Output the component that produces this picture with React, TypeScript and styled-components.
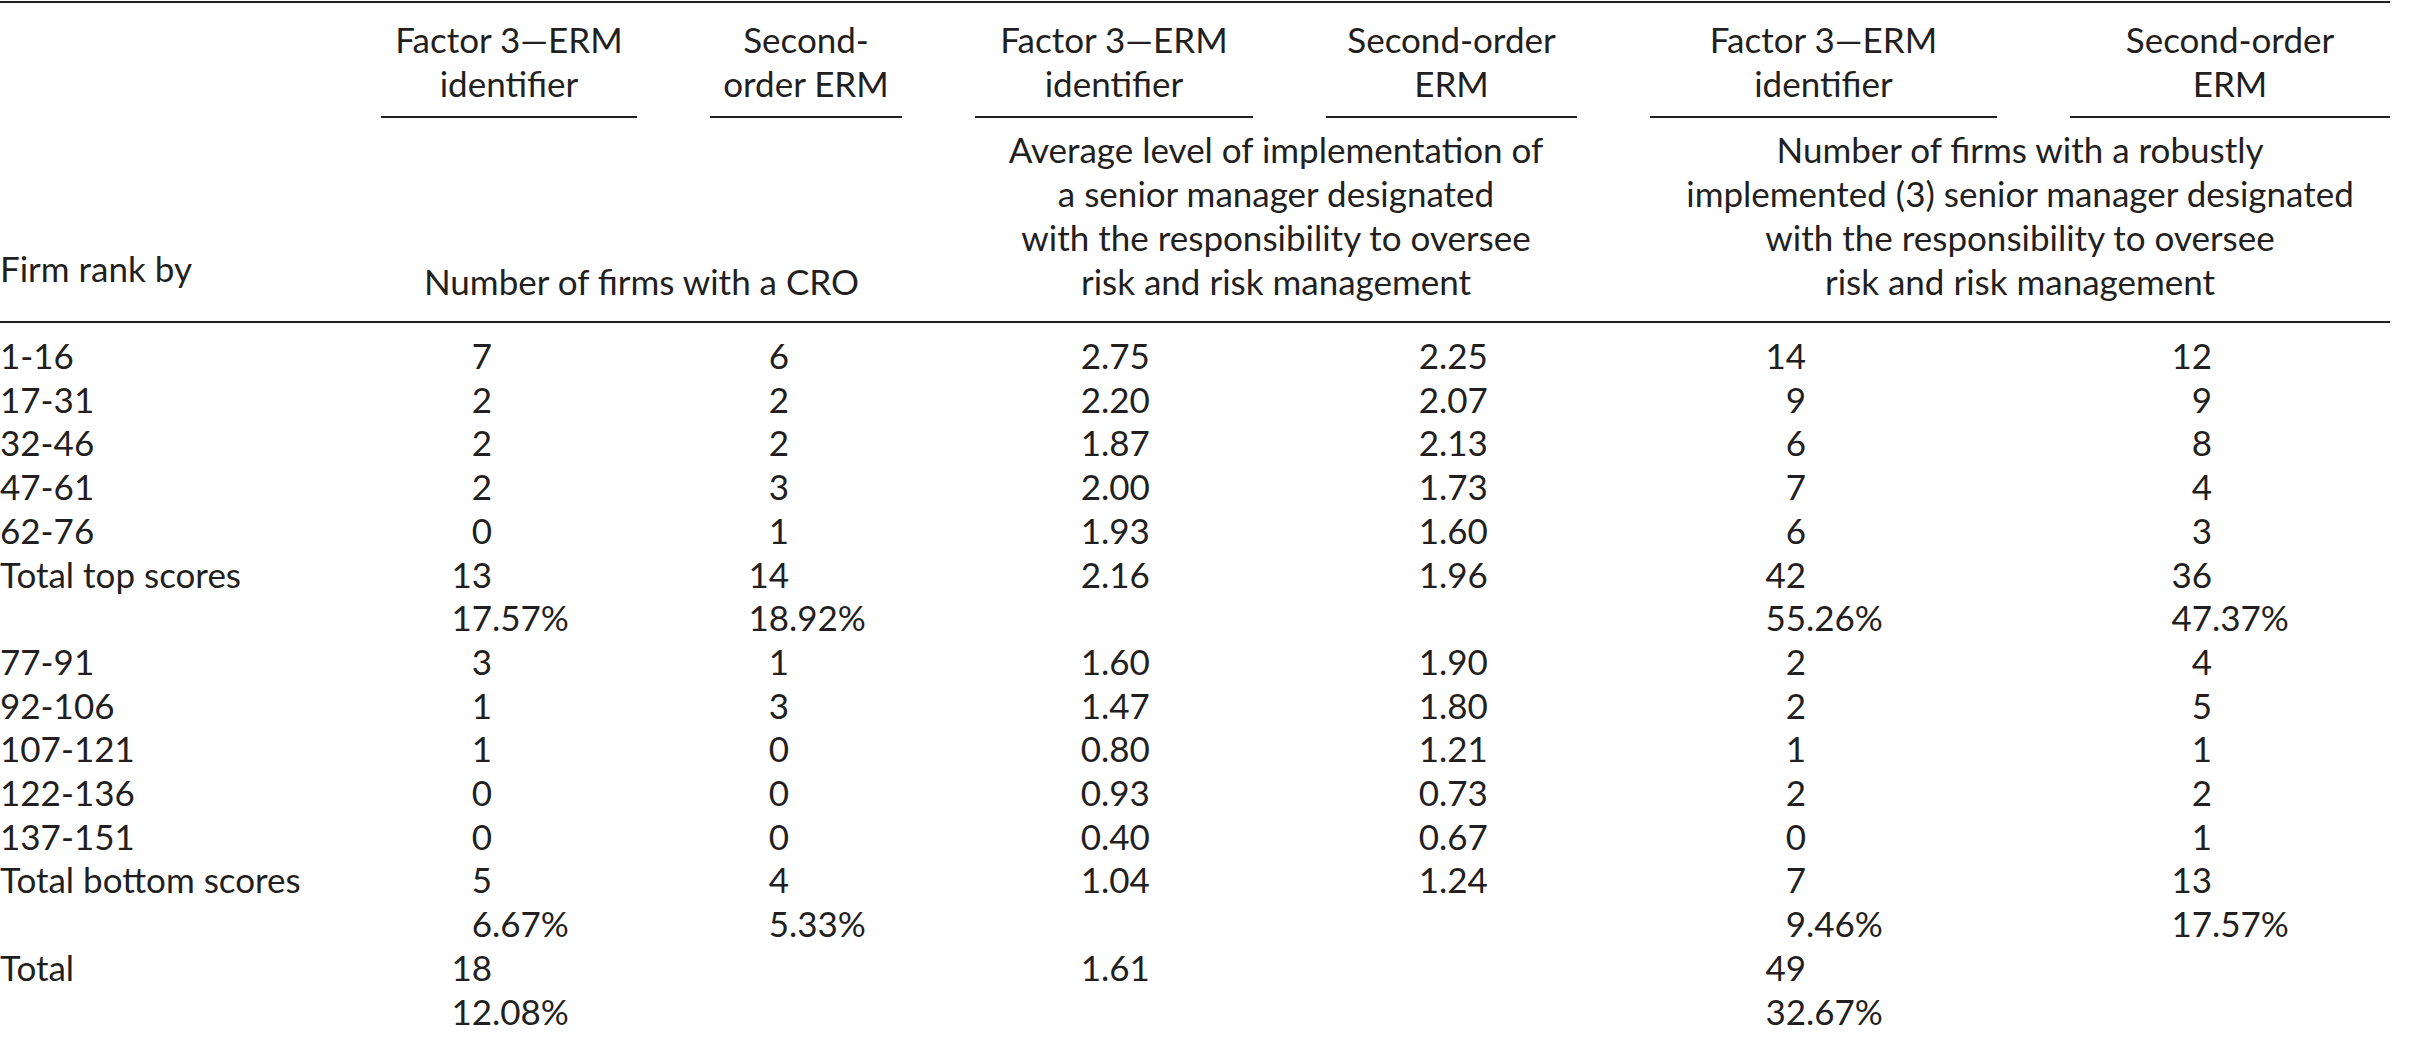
import styled, { createGlobalStyle } from "styled-components";

const ink = "#231f20";
const columns = "308px 256px 192px 278px 251px 347px 320px";

// where the integer part of a number ends, measured from the column's left edge
const intEdge = [0, 111, 79, 126, 113, 156, 142];

const rows: string[][] = [
  ["1-16", "7", "6", "2.75", "2.25", "14", "12"],
  ["17-31", "2", "2", "2.20", "2.07", "9", "9"],
  ["32-46", "2", "2", "1.87", "2.13", "6", "8"],
  ["47-61", "2", "3", "2.00", "1.73", "7", "4"],
  ["62-76", "0", "1", "1.93", "1.60", "6", "3"],
  ["Total top scores", "13", "14", "2.16", "1.96", "42", "36"],
  ["", "17.57%", "18.92%", "", "", "55.26%", "47.37%"],
  ["77-91", "3", "1", "1.60", "1.90", "2", "4"],
  ["92-106", "1", "3", "1.47", "1.80", "2", "5"],
  ["107-121", "1", "0", "0.80", "1.21", "1", "1"],
  ["122-136", "0", "0", "0.93", "0.73", "2", "2"],
  ["137-151", "0", "0", "0.40", "0.67", "0", "1"],
  ["Total bottom scores", "5", "4", "1.04", "1.24", "7", "13"],
  ["", "6.67%", "5.33%", "", "", "9.46%", "17.57%"],
  ["Total", "18", "", "1.61", "", "49", ""],
  ["", "12.08%", "", "", "", "32.67%", ""],
];

const groups = [
  ["Factor 3—ERM", "identifier"],
  ["Second-", "order ERM"],
  ["Factor 3—ERM", "identifier"],
  ["Second-order", "ERM"],
  ["Factor 3—ERM", "identifier"],
  ["Second-order", "ERM"],
];

const GlobalStyle = createGlobalStyle`
  body {
    margin: 0;
    background: #ffffff;
  }
`;

const Sheet = styled.div`
  width: 2390px;
  margin-top: 1px;
  border-top: 2px solid ${ink};
  color: ${ink};
  font-family: Lato, "Open Sans", sans-serif;
  font-size: 35px;
  font-variant-numeric: tabular-nums;
`;

const Head = styled.div`
  border-bottom: 2px solid ${ink};
  padding-bottom: 18px;
`;

const Row = styled.div<{ $pt?: number }>`
  display: grid;
  grid-template-columns: ${columns};
  column-gap: 73px;
  padding-top: ${(p) => p.$pt ?? 0}px;
`;

const Group = styled.div`
  padding: 14px 0 11px;
  border-bottom: 2px solid ${ink};
  text-align: center;
  line-height: 44px;
  white-space: nowrap;
`;

const Caption = styled.div<{ $span: number; $lift?: number; $left?: boolean }>`
  grid-column: span ${(p) => p.$span};
  align-self: end;
  padding-bottom: ${(p) => p.$lift ?? 0}px;
  text-align: ${(p) => (p.$left ? "left" : "center")};
  line-height: 44px;
  white-space: nowrap;
`;

const Body = styled.div`
  display: grid;
  grid-template-columns: ${columns};
  column-gap: 73px;
  padding-top: 11px;
  line-height: 43.7px;
`;

const Label = styled.div`
  white-space: nowrap;
`;

const NumCell = styled.div`
  display: flex;
  white-space: nowrap;
`;

const IntPart = styled.span<{ $w: number }>`
  width: ${(p) => p.$w}px;
  text-align: right;
  flex: none;
`;

const Lines = ({ lines }: { lines: string[] }) => (
  <>
    {lines.map((l, i) => (
      <div key={i}>{l}</div>
    ))}
  </>
);

const Num = ({ value, edge }: { value: string; edge: number }) => {
  const dot = value.indexOf(".");
  const whole = dot < 0 ? value : value.slice(0, dot);
  const rest = dot < 0 ? "" : value.slice(dot);
  return (
    <NumCell>
      <IntPart $w={edge}>{whole}</IntPart>
      <span>{rest}</span>
    </NumCell>
  );
};

const App = () => {
  return (
    <>
      <GlobalStyle />
      <Sheet>
        <Head>
          <Row>
            <div />
            {groups.map((g, i) => (
              <Group key={i}>
                <Lines lines={g} />
              </Group>
            ))}
          </Row>
          <Row $pt={9}>
            <Caption $span={1} $lift={13} $left>
              Firm rank by
            </Caption>
            <Caption $span={2}>Number of firms with a CRO</Caption>
            <Caption $span={2}>
              <Lines
                lines={[
                  "Average level of implementation of",
                  "a senior manager designated",
                  "with the responsibility to oversee",
                  "risk and risk management",
                ]}
              />
            </Caption>
            <Caption $span={2}>
              <Lines
                lines={[
                  "Number of firms with a robustly",
                  "implemented (3) senior manager designated",
                  "with the responsibility to oversee",
                  "risk and risk management",
                ]}
              />
            </Caption>
          </Row>
        </Head>
        <Body>
          {rows.map((r, ri) =>
            r.map((v, ci) =>
              ci === 0 ? (
                <Label key={`${ri}-${ci}`}>{v}</Label>
              ) : v ? (
                <Num key={`${ri}-${ci}`} value={v} edge={intEdge[ci]} />
              ) : (
                <div key={`${ri}-${ci}`} />
              )
            )
          )}
        </Body>
      </Sheet>
    </>
  );
};

export default App;
